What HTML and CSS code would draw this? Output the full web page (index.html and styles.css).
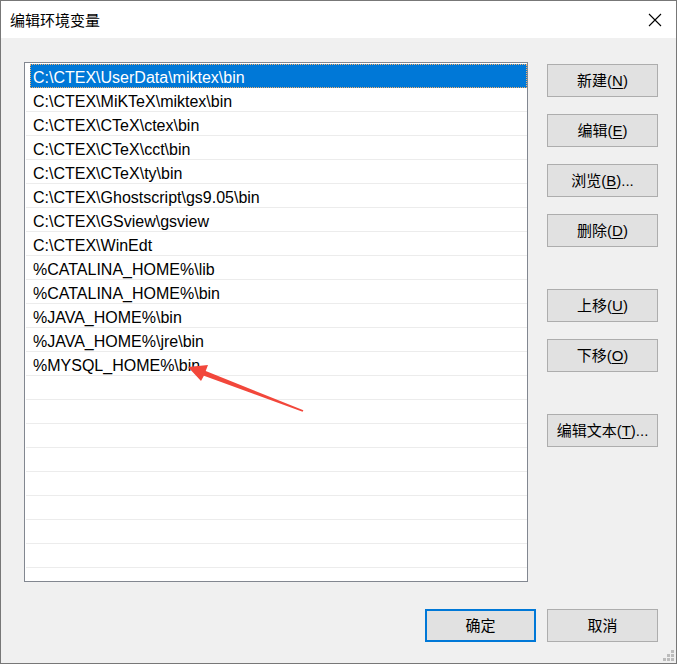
FILE: index.html
```html
<!DOCTYPE html>
<html lang="zh-CN">
<head>
<meta charset="utf-8">
<title>编辑环境变量</title>
<link rel="stylesheet" href="styles.css">
</head>
<body>
<div class="window">
  <div class="titlebar">
    <span class="title">编辑环境变量</span>
    <svg class="close" width="14" height="14" viewBox="0 0 14 14"><path d="M1 1 L13 13 M13 1 L1 13" stroke="#000" stroke-width="1.1" fill="none"/></svg>
  </div>
  <div class="content">
    <div class="listbox">
      <div class="row selected"><span class="sel">C:\CTEX\UserData\miktex\bin</span></div>
      <div class="row"><span class="txt">C:\CTEX\MiKTeX\miktex\bin</span></div>
      <div class="row"><span class="txt">C:\CTEX\CTeX\ctex\bin</span></div>
      <div class="row"><span class="txt">C:\CTEX\CTeX\cct\bin</span></div>
      <div class="row"><span class="txt">C:\CTEX\CTeX\ty\bin</span></div>
      <div class="row"><span class="txt">C:\CTEX\Ghostscript\gs9.05\bin</span></div>
      <div class="row"><span class="txt">C:\CTEX\GSview\gsview</span></div>
      <div class="row"><span class="txt">C:\CTEX\WinEdt</span></div>
      <div class="row"><span class="txt">%CATALINA_HOME%\lib</span></div>
      <div class="row"><span class="txt">%CATALINA_HOME%\bin</span></div>
      <div class="row"><span class="txt">%JAVA_HOME%\bin</span></div>
      <div class="row"><span class="txt">%JAVA_HOME%\jre\bin</span></div>
      <div class="row"><span class="txt">%MYSQL_HOME%\bin</span></div>
      <div class="row"></div>
      <div class="row"></div>
      <div class="row"></div>
      <div class="row"></div>
      <div class="row"></div>
      <div class="row"></div>
      <div class="row"></div>
      <div class="row"></div>
      <div class="row"></div>
    </div>
    <div class="side">
      <button class="btn">新建(<u>N</u>)</button>
      <button class="btn">编辑(<u>E</u>)</button>
      <button class="btn">浏览(<u>B</u>)...</button>
      <button class="btn">删除(<u>D</u>)</button>
      <button class="btn far">上移(<u>U</u>)</button>
      <button class="btn">下移(<u>O</u>)</button>
      <button class="btn far">编辑文本(<u>T</u>)...</button>
    </div>
    <div class="footer">
      <button class="btn default">确定</button>
      <button class="btn">取消</button>
    </div>
  </div>
  <div class="grip">
    <i class="d d1"></i><i class="d d2"></i><i class="d d3"></i>
    <i class="d d4"></i><i class="d d5"></i><i class="d d6"></i>
  </div>
  <svg class="arrow" width="677" height="664" viewBox="0 0 677 664">
    <polygon points="188,367 208,365 205.7,371.1 303.4,410.3 302.6,411.7 203.9,375.7 201,381" fill="#f2473b"/>
  </svg>
</div>
</body>
</html>
```
FILE: styles.css
```css
* { box-sizing: border-box; }
html, body { margin: 0; padding: 0; background: #f0f0f0; }
.window {
  position: relative;
  width: 677px;
  height: 664px;
  border: 1px solid #777;
  background: #f0f0f0;
  display: flex;
  flex-direction: column;
  overflow: hidden;
}
.titlebar {
  height: 37px;
  background: #fff;
  display: flex;
  align-items: center;
  justify-content: space-between;
  padding-left: 9px;
  padding-right: 14px;
}
.title {
  font-family: "Noto Sans CJK SC", sans-serif;
  font-size: 15px;
  color: #000;
  line-height: 20px;
  padding-top: 1px;
}
.close { display: block; margin-top: 1px; }
.content {
  flex: 1;
  display: grid;
  grid-template-columns: 504px 111px;
  grid-template-rows: 520px 33px;
  column-gap: 19px;
  row-gap: 27px;
  padding: 24px 18px 21px 23px;
}
.listbox {
  background: #fff;
  border: 1px solid #828790;
  padding: 1px 0 0 0;
  overflow: hidden;
  font-family: "Liberation Sans", Arial, sans-serif;
  font-size: 16px;
  color: #000;
}
.row {
  height: 24px;
  border-bottom: 1px solid #ececec;
  margin-left: 1px;
  display: flex;
}
.row.selected { border-bottom-color: transparent; margin-left: 0; }
.txt {
  padding: 4px 0 0 7px;
  line-height: 20px;
  white-space: nowrap;
}
.sel {
  flex: 1;
  margin-left: 5px;
  height: 24px;
  background: #0078d7;
  color: #fff;
  padding: 3px 0 0 2px;
  line-height: 20px;
  border: 1px dotted #f3b06c;
  white-space: nowrap;
}
.side {
  display: flex;
  flex-direction: column;
  padding-top: 2px;
  gap: 17px;
}
.btn {
  width: 111px;
  height: 33px;
  margin: 0;
  padding: 0;
  background: #e1e1e1;
  border: 1px solid #adadad;
  border-radius: 0;
  font-family: "Liberation Sans", "Noto Sans CJK SC", sans-serif;
  font-size: 15px;
  color: #000;
  line-height: 20px;
  text-align: center;
}
.btn u { text-decoration: underline; text-underline-offset: 2px; }
.btn.far { margin-top: 25px; }
.footer {
  grid-column: 1 / 3;
  display: flex;
  justify-content: flex-end;
  gap: 11px;
}
.btn.default { border: 2px solid #0078d7; }
.grip { position: absolute; right: 2px; bottom: 1px; width: 12px; height: 12px; }
.d { position: absolute; width: 3px; height: 3px; background: #bcbcbc; }
.d1 { right: 0; top: 0; }
.d2 { right: 0; top: 4px; }
.d3 { right: 4px; top: 4px; }
.d4 { right: 0; top: 8px; }
.d5 { right: 4px; top: 8px; }
.d6 { right: 8px; top: 8px; }
.arrow { position: absolute; left: -1px; top: -1px; pointer-events: none; }
```
